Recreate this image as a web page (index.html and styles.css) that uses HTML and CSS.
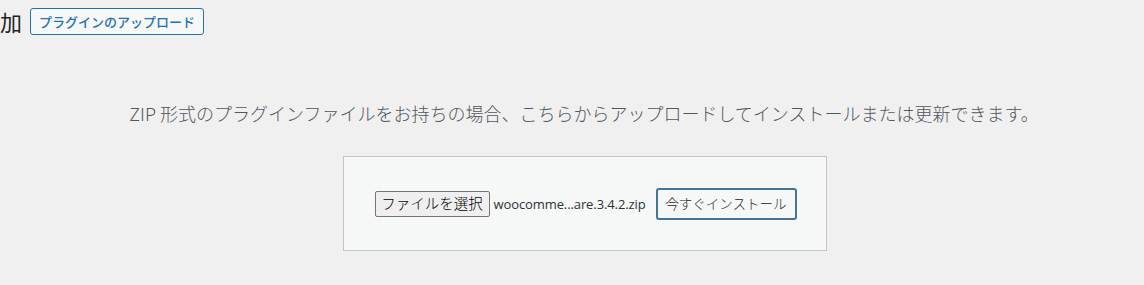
FILE: index.html
```html
<!DOCTYPE html>
<html lang="ja">
<head>
<meta charset="utf-8">
<title>プラグインを追加</title>
<link rel="stylesheet" href="styles.css">
</head>
<body>
<div class="wrap">
  <div class="header">
    <h1 class="title">加</h1>
    <a class="title-action" href="#">プラグインのアップロード</a>
  </div>
  <div class="upload">
    <p class="install-help">ZIP 形式のプラグインファイルをお持ちの場合、こちらからアップロードしてインストールまたは更新できます。</p>
    <div class="form-row">
      <form class="upload-form">
        <span class="file-field">
          <button type="button" class="file-btn">ファイルを選択</button>
          <span class="file-name">woocomme...are.3.4.2.zip</span>
        </span>
        <button type="button" class="install-btn">今すぐインストール</button>
      </form>
    </div>
  </div>
</div>
</body>
</html>
```

FILE: styles.css
```css
html, body {
  margin: 0;
  padding: 0;
  background: #f0f0f1;
  overflow: hidden;
}
body {
  font-family: "Noto Sans", "Noto Sans CJK JP", sans-serif;
  color: #3c434a;
}
.wrap {
  width: 1160px;
}
.header {
  display: flex;
  align-items: center;
  height: 42px;
  gap: 8px;
}
.title {
  margin: 0;
  font-size: 22px;
  font-weight: 400;
  line-height: 1;
  color: #1d2327;
  font-family: "Noto Sans CJK JP", sans-serif;
}
.title-action {
  display: inline-flex;
  align-items: center;
  height: 27px;
  box-sizing: border-box;
  padding: 0 8px;
  border: 1px solid #2271b1;
  border-radius: 3px;
  background: #f6f7f7;
  color: #2271b1;
  font-size: 13px;
  font-weight: 500;
  text-decoration: none;
  font-family: "Noto Sans CJK JP", sans-serif;
  margin-top: 1px;
}
.upload {
  text-align: center;
}
.install-help {
  margin: 58px 0 0;
  padding-left: 8px;
  font-size: 18px;
  line-height: 27px;
  color: #50575e;
  font-family: "Noto Sans CJK JP", sans-serif;
  font-weight: 300;
}
.form-row {
  display: flex;
  justify-content: center;
  padding-left: 9px;
  margin-top: 29px;
}
.upload-form {
  display: flex;
  align-items: center;
  justify-content: space-between;
  width: 484px;
  height: 95px;
  box-sizing: border-box;
  padding: 30px 29px 30px 31px;
  border: 1px solid #c3c4c7;
  background: #f6f7f7;
  margin: 0;
}
.file-field {
  display: flex;
  align-items: center;
  gap: 4px;
}
.file-btn {
  height: 26px;
  width: 115px;
  box-sizing: border-box;
  padding: 0;
  border: 1px solid #767676;
  border-radius: 2px;
  background: #efefef;
  color: #000;
  font-size: 14.5px;
  font-family: "Noto Sans CJK JP", sans-serif;
  font-weight: 300;
  line-height: 1;
}
.file-name {
  font-size: 13px;
  color: #2c3338;
  font-family: "Open Sans", "Noto Sans", sans-serif;
  letter-spacing: -0.1px;
}
.install-btn {
  width: 141px;
  height: 32px;
  box-sizing: border-box;
  padding: 0;
  border: 2px solid #41769a;
  border-radius: 3px;
  background: #f6f7f7;
  color: #1d2327;
  font-size: 13.5px;
  font-family: "Noto Sans CJK JP", sans-serif;
  font-weight: 300;
  line-height: 1;
}
```
